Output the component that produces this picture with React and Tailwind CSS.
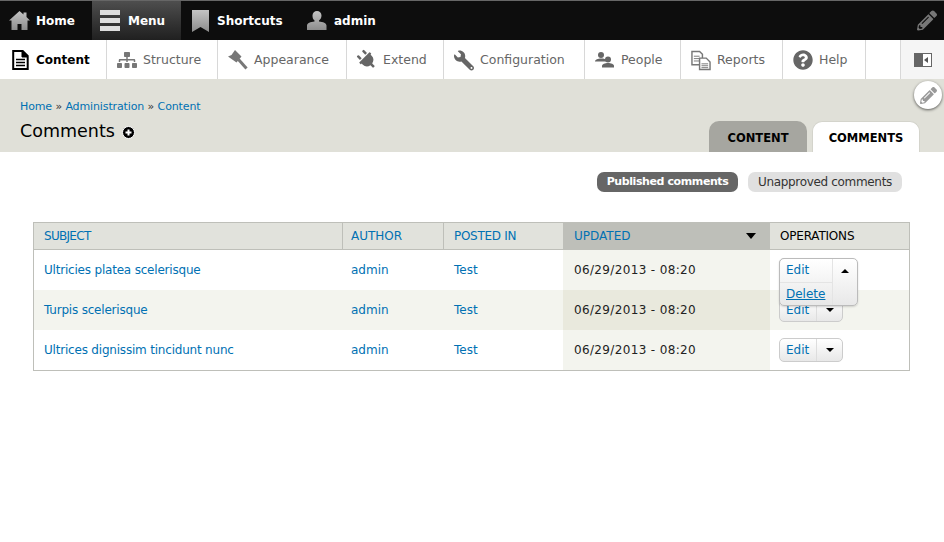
import React from 'react'
import { FaPencilAlt, FaSitemap, FaPlug, FaWrench, FaQuestionCircle } from 'react-icons/fa'

const font = { fontFamily: '"DejaVu Sans", sans-serif' }

function GrayGradient() {
    return (
        <defs>
            <linearGradient id="bar" x1="0" y1="0" x2="0" y2="1">
                <stop offset="0" stopColor="#c4c4c4" />
                <stop offset="1" stopColor="#8c8c8c" />
            </linearGradient>
        </defs>
    )
}

function HomeIcon() {
    return (
        <svg width="21" height="19" viewBox="0 0 21 19">
            <GrayGradient />
            <path d="M10.500 0L14.500 3.500V1.500H17.500V6L21 9.500H18.500V19H12.500V13H8.500V19H2.500V9.500H0z" fill="url(#bar)" />
        </svg>
    )
}

function BookmarkIcon() {
    return (
        <svg width="17" height="22" viewBox="0 0 17 22">
            <GrayGradient />
            <path d="M0 0H17V22L8.500 17L0 22z" fill="url(#bar)" />
        </svg>
    )
}

function UserIcon() {
    return (
        <svg width="20" height="19" viewBox="0 0 20 19">
            <GrayGradient />
            <path d="M10 0a4.500 4.500 0 0 1 4.500 4.500c0 2-1 4-2.500 5v1c4 .5 7.500 1.500 7.500 4V19H0v-4.500c0-2.500 3.500-3.500 7.500-4v-1C6 8.500 5.500 6.500 5.500 4.500A4.500 4.500 0 0 1 10 0z" fill="url(#bar)" />
        </svg>
    )
}

function ContentIcon() {
    return (
        <svg width="17" height="20" viewBox="0 0 17 20">
            <path d="M1.200 1h9.500l5 5v13H1.200z" fill="#fff" stroke="#000" strokeWidth="2" />
            <path d="M10 1v6h6" fill="#000" stroke="#000" strokeWidth="1" />
            <path d="M4 9.500h9M4 12.500h9M4 15.500h9" stroke="#000" strokeWidth="1.500" />
        </svg>
    )
}

function AppearanceIcon() {
    return (
        <svg width="20" height="20" viewBox="0 0 20 20">
            <path d="M7 0L13.500 6.500L8.500 12.500L0 6.500L3.500 5z" fill="#777" />
            <path d="M10.500 9.500L18.500 18.500" stroke="#777" strokeWidth="3" />
        </svg>
    )
}

function PeopleIcon() {
    return (
        <svg width="20" height="16" viewBox="0 0 20 16">
            <circle cx="6" cy="3" r="3" fill="#666" />
            <path d="M0 9.500c0-2 3-3 6-3s5 .5 5.500 2V9.500z" fill="#666" />
            <circle cx="13" cy="7.500" r="3" fill="#666" />
            <path d="M7 15.500v-1.500c0-2 3-3 6-3s6 1 6 3v1.500z" fill="#666" />
        </svg>
    )
}

function ReportsIcon() {
    return (
        <svg width="21" height="21" viewBox="0 0 21 21">
            <path d="M1 1h8l3 3v11H1z" fill="#fff" stroke="#777" strokeWidth="1.500" />
            <path d="M3 6h6M3 8.500h6M3 11h6" stroke="#777" />
            <path d="M9 8h7l4 4v8H9z" fill="#fff" stroke="#777" strokeWidth="1.500" />
            <path d="M11 14h7M11 16h7M11 18h7" stroke="#777" />
        </svg>
    )
}

function AddIcon() {
    return (
        <svg width="13" height="13" viewBox="0 0 13 13">
            <circle cx="6.500" cy="6.500" r="6" fill="#000" stroke="#fff" />
            <path d="M6.500 3.500v6M3.500 6.500h6" stroke="#fff" strokeWidth="2" />
        </svg>
    )
}

const trayItems = [
    { label: 'Content', icon: <ContentIcon />, width: 'w-[107px]', active: true },
    { label: 'Structure', icon: <FaSitemap className="w-[20px] h-[20px] text-[#777]" />, width: 'w-[111px]' },
    { label: 'Appearance', icon: <AppearanceIcon />, width: 'w-[129px]' },
    { label: 'Extend', icon: <FaPlug className="w-[20px] h-[20px] text-[#666] -rotate-45" />, width: 'w-[97px]' },
    { label: 'Configuration', icon: <FaWrench className="w-[21px] h-[21px] text-[#666] -scale-x-100" />, width: 'w-[141px]' },
    { label: 'People', icon: <PeopleIcon />, width: 'w-[96px]' },
    { label: 'Reports', icon: <ReportsIcon />, width: 'w-[102px]' },
    { label: 'Help', icon: <FaQuestionCircle className="w-[20px] h-[20px] text-[#666]" />, width: 'w-[83px]' },
]

const rows = [
    { subject: 'Ultricies platea scelerisque', white: true },
    { subject: 'Turpis scelerisque', white: false },
    { subject: 'Ultrices dignissim tincidunt nunc', white: true },
]

function Toolbar() {
    return (
        <header>
            <div className="h-[40px] bg-[#0d0d0d] border-t border-[#666] flex items-center text-white font-bold text-[12px]">
                <a className="w-[92px] h-full flex items-center pl-[9px] gap-[6px]">
                    <HomeIcon />
                    Home
                </a>
                <a className="w-[89px] h-full flex items-center pl-[8px] gap-[8px] bg-gradient-to-b from-[#4e4e4e] to-[#202020]">
                    <span className="w-[20px] flex flex-col gap-[3px]">
                        <span className="h-[5px] bg-[#ddd]"></span>
                        <span className="h-[5px] bg-[#ddd]"></span>
                        <span className="h-[5px] bg-[#ddd]"></span>
                    </span>
                    Menu
                </a>
                <a className="h-full flex items-center pl-[11px] gap-[8px] w-[115px]">
                    <BookmarkIcon />
                    Shortcuts
                </a>
                <a className="h-full flex items-center pl-[11px] gap-[7px]">
                    <UserIcon />
                    admin
                </a>
                <FaPencilAlt className="ml-auto mr-[7px] w-[20px] h-[21px] text-[#777]" />
            </div>
            <nav className="h-[39px] bg-white flex shadow-[0_2px_1px_rgba(0,0,0,0.4)] relative">
                {trayItems.map((item) => (
                    <a
                        key={item.label}
                        className={`${item.width} flex items-center pl-[10px] pt-[1px] gap-[6px] border-r border-[#d8d8d8] ${item.active ? 'text-black font-bold text-[12px]' : 'text-[#666] text-[12.5px]'}`}
                    >
                        <span className="w-[20px] flex justify-center shrink-0">{item.icon}</span>
                        {item.label}
                    </a>
                ))}
                <div className="ml-auto w-[44px] bg-[#f5f5f5] border-l border-[#d8d8d8] flex items-center justify-center">
                    <span className="w-[18px] h-[14px] border border-[#666] bg-white flex items-center">
                        <span className="w-[8px] h-full bg-[#666]"></span>
                        <span className="ml-[1px] w-0 h-0 border-y-[3px] border-y-transparent border-r-[4px] border-r-[#555]"></span>
                    </span>
                </div>
            </nav>
        </header>
    )
}

function PageHeader() {
    return (
        <div className="h-[73px] bg-[#e0e0d8] relative pl-[20px]">
            <p className="pt-[21px] text-[11px] leading-[13px] tracking-[-0.12px] text-[#0071b3]">
                Home <span className="text-[#333]">»</span> Administration <span className="text-[#333]">»</span> Content
            </p>
            <div className="mt-[6px] flex items-center gap-[7px]">
                <h1 className="text-[17.500px] leading-[24px] text-black">Comments</h1>
                <span className="flex mt-[2px]"><AddIcon /></span>
            </div>
            <div className="absolute right-[24px] bottom-0 flex gap-[5px] text-[11.500px] font-bold text-black">
                <a className="w-[98px] h-[31px] pt-[4px] rounded-t-[10px] bg-[#a6a6a0] flex items-center justify-center">CONTENT</a>
                <a className="w-[108px] h-[31px] pt-[4px] rounded-t-[10px] bg-white border-x border-t border-[#d4d4cc] flex items-center justify-center">COMMENTS</a>
            </div>
            <span className="absolute right-[2px] top-[2px] w-[28px] h-[28px] rounded-full bg-white shadow-[0_1px_3px_rgba(0,0,0,0.6)] flex items-center justify-center">
                <FaPencilAlt className="w-[17px] h-[17px] text-[#999]" />
            </span>
        </div>
    )
}

function Operations({ open }) {
    return (
        <div className="relative w-[64px] h-[24px] rounded-[5px] border border-[#ccc] bg-gradient-to-b from-white to-[#e8e8e8] flex">
            <a className="flex-1 pl-[6px] leading-[22px] text-[#0071b3]">Edit</a>
            <span className="w-[26px] border-l border-[#ddd] flex items-center justify-center">
                <span className="w-0 h-0 border-x-[4px] border-x-transparent border-t-[4px] border-t-black"></span>
            </span>
            {open && (
                <div className="absolute left-[-1px] top-[-1px] w-[79px] h-[48px] rounded-[5px] border border-[#bbb] bg-gradient-to-b from-white to-[#e8e8e8] shadow-[0_1px_2px_rgba(0,0,0,0.15)] flex z-10">
                    <div className="w-[53px] border-r border-[#e4e4e4]">
                        <a className="block h-[24px] pl-[6px] leading-[22px] text-[#0071b3] border-b border-[#e4e4e4]">Edit</a>
                        <a className="block pl-[6px] leading-[22px] text-[#0071b3] underline">Delete</a>
                    </div>
                    <span className="flex-1 flex justify-center pt-[10px]">
                        <span className="w-0 h-0 border-x-[4px] border-x-transparent border-b-[4px] border-b-black"></span>
                    </span>
                </div>
            )}
        </div>
    )
}

function CommentsTable() {
    return (
        <table className="w-[877px] table-fixed border-separate border-spacing-0 border border-[#bebfb9] text-[12px]">
            <colgroup>
                <col className="w-[309px]" />
                <col className="w-[101px]" />
                <col className="w-[119px]" />
                <col className="w-[207px]" />
                <col className="w-[139px]" />
            </colgroup>
            <thead>
                <tr className="h-[27px] bg-[#e1e2dc] text-left text-[#0071b3]">
                    <th className="font-normal pl-[10px] border-r border-b border-[#bebfb9] tracking-[-0.7px]">SUBJECT</th>
                    <th className="font-normal pl-[8px] border-r border-b border-[#bebfb9]">AUTHOR</th>
                    <th className="font-normal pl-[10px] border-b border-[#bebfb9] tracking-[-0.3px]">POSTED IN</th>
                    <th className="font-normal pl-[11px] bg-[#bebfb9] border-b border-[#bebfb9]">
                        <div className="flex items-center justify-between pr-[14px]">
                            UPDATED
                            <span className="w-0 h-0 border-x-[5px] border-x-transparent border-t-[6px] border-t-black"></span>
                        </div>
                    </th>
                    <th className="font-normal pl-[10px] text-black border-b border-[#bebfb9] tracking-[-0.2px]">OPERATIONS</th>
                </tr>
            </thead>
            <tbody>
                {rows.map((row, i) => (
                    <tr key={row.subject} className={`h-[40px] ${row.white ? 'bg-white' : 'bg-[#f3f4ee]'}`}>
                        <td className="pl-[10px] text-[#0071b3] tracking-[-0.2px]">{row.subject}</td>
                        <td className="pl-[8px] text-[#0071b3]">admin</td>
                        <td className="pl-[10px] text-[#0071b3]">Test</td>
                        <td className={`pl-[11px] text-[#222] tracking-[0.35px] ${row.white ? 'bg-[#f3f4ee]' : 'bg-[#e9e9dd]'}`}>06/29/2013 - 08:20</td>
                        <td className="pl-[9px]"><Operations open={i === 0} /></td>
                    </tr>
                ))}
            </tbody>
        </table>
    )
}

export default function App() {
    return (
        <div className="min-h-[542px] bg-white" style={font}>
            <Toolbar />
            <PageHeader />
            <main className="px-[33px]">
                <div className="pt-[20px] pr-[9px] flex justify-end gap-[10px]">
                    <a className="h-[20px] w-[141px] rounded-[7px] bg-[#666] text-white font-bold text-[11px] tracking-[-0.4px] flex items-center justify-center">Published comments</a>
                    <a className="h-[20px] w-[154px] rounded-[7px] bg-[#e0e0e0] text-[#333] text-[12px] tracking-[-0.33px] flex items-center justify-center">Unapproved comments</a>
                </div>
                <div className="mt-[30px]">
                    <CommentsTable />
                </div>
            </main>
        </div>
    )
}
